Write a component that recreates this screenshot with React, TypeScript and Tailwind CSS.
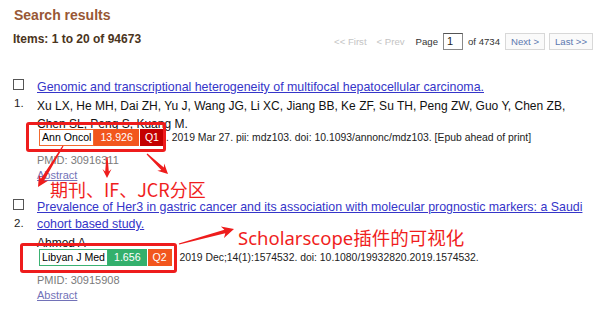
import React from "react";

type P = [number, number];

function arrowPoints(t: P, p: P, headLen = 11, headHalf = 5.5, shaftTail = 0.6, shaftHead = 1.8): string {
  const dx = p[0] - t[0];
  const dy = p[1] - t[1];
  const len = Math.hypot(dx, dy);
  const ux = dx / len;
  const uy = dy / len;
  const nx = -uy;
  const ny = ux;
  const bx = p[0] - ux * headLen;
  const by = p[1] - uy * headLen;
  const bx2 = p[0] - ux * (headLen - 2.5);
  const by2 = p[1] - uy * (headLen - 2.5);
  const pts: P[] = [
    [t[0] + nx * shaftTail, t[1] + ny * shaftTail],
    [bx2 + nx * shaftHead, by2 + ny * shaftHead],
    [bx + nx * headHalf, by + ny * headHalf],
    p,
    [bx - nx * headHalf, by - ny * headHalf],
    [bx2 - nx * shaftHead, by2 - ny * shaftHead],
    [t[0] - nx * shaftTail, t[1] - ny * shaftTail],
  ];
  return pts.map((q) => `${q[0].toFixed(1)},${q[1].toFixed(1)}`).join(" ");
}

function Checkbox() {
  return <div className="w-[11px] h-[11px] border border-[#555] bg-white" />;
}

function Badge({
  name,
  impact,
  q,
  nameBorder,
  impactBg,
  qBg,
}: {
  name: string;
  impact: string;
  q: string;
  nameBorder: string;
  impactBg: string;
  qBg: string;
}) {
  return (
    <span className="inline-flex items-stretch h-[17px] text-[10.6px] leading-[15px] align-middle">
      <span className={`bg-white text-black px-[2px] border ${nameBorder}`}>{name}</span>
      <span className={`text-white px-[6px] pt-px ${impactBg}`}>{impact}</span>
      <span className={`text-white px-[5px] pt-px ml-px ${qBg}`}>{q}</span>
    </span>
  );
}

function Result({
  num,
  title,
  authors,
  badge,
  cite,
  pmid,
  top,
  badgeGap,
}: {
  num: string;
  title: React.ReactNode;
  authors: React.ReactNode;
  badge: React.ReactNode;
  cite: string;
  pmid: string;
  top: string;
  badgeGap: string;
}) {
  return (
    <div className={`flex ${top}`}>
      <div className="w-[24px] shrink-0 flex flex-col">
        <div>
          <Checkbox />
        </div>
        <div className="text-[11.5px] leading-[17px] text-[#222] mt-[5px] pl-px">{num}</div>
      </div>
      <div className="w-[556px]">
        <a className="block text-[12.4px] leading-[17px] text-[#3535c9] underline underline-offset-[1px]">{title}</a>
        <div className="text-[12px] leading-[18px] text-[#111] mt-[1px]">{authors}</div>
        <div className={`flex items-center ${badgeGap} ml-[2px] text-[10.4px] text-[#222]`}>
          {badge}
          <span className="ml-[2px]">{cite}</span>
        </div>
        <div className="text-[11px] leading-[14px] text-[#7a7a7a] mt-[7px]">PMID: {pmid}</div>
        <div className="text-[11px] leading-[14px] text-[#7272b8] underline mt-px">Abstract</div>
      </div>
    </div>
  );
}

export default function App() {
  return (
    <div className="relative w-[600px] h-[313px] overflow-hidden bg-white font-['Liberation_Sans',Arial,sans-serif]">
      <div className="pl-[13px] pt-[6px]">
        <h2 className="text-[14px] leading-[18px] font-bold text-[#985735] pl-px">Search results</h2>
        <div className="flex items-start justify-between pr-[7px] mt-[7px]">
          <div className="text-[12px] leading-[16px] font-bold text-[#4a3420]">Items: 1 to 20 of 94673</div>
          <div className="flex items-center text-[9.6px] leading-[15px] mt-[2px]">
            <span className="text-[#c4c4c4]">&lt;&lt; First</span>
            <span className="ml-[10px] text-[#c4c4c4]">&lt; Prev</span>
            <span className="ml-[11px] text-[#333]">Page</span>
            <span className="ml-[5px] w-[20px] h-[17px] border border-[#888] border-t-[#555] text-[#222] text-[11px] pl-[3px] leading-[15px]">1</span>
            <span className="ml-[5px] text-[#333]">of 4734</span>
            <span className="ml-[5px] h-[17px] border border-[#d8d8d8] bg-[#fafafa] text-[#5a78b0] px-[5px] leading-[15px]">Next &gt;</span>
            <span className="ml-[4px] h-[17px] border border-[#d8d8d8] bg-[#fafafa] text-[#5a78b0] px-[5px] leading-[15px]">Last &gt;&gt;</span>
          </div>
        </div>

        <Result
          top="mt-[29px]"
          badgeGap="-mt-[4px]"
          num="1."
          title="Genomic and transcriptional heterogeneity of multifocal hepatocellular carcinoma."
          authors="Xu LX, He MH, Dai ZH, Yu J, Wang JG, Li XC, Jiang BB, Ke ZF, Su TH, Peng ZW, Guo Y, Chen ZB, Chen SL, Peng S, Kuang M."
          badge={
            <Badge
              name="Ann Oncol"
              impact="13.926"
              q="Q1"
              nameBorder="border-[#f26a2e]"
              impactBg="bg-[#f2561d]"
              qBg="bg-[#c40000]"
            />
          }
          cite=". 2019 Mar 27. pii: mdz103. doi: 10.1093/annonc/mdz103. [Epub ahead of print]"
          pmid="30916311"
        />

        <Result
          top="mt-[17px]"
          badgeGap="-mt-[3px]"
          num="2."
          title="Prevalence of Her3 in gastric cancer and its association with molecular prognostic markers: a Saudi cohort based study."
          authors="Ahmed A"
          badge={
            <Badge
              name="Libyan J Med"
              impact="1.656"
              q="Q2"
              nameBorder="border-[#3bb273]"
              impactBg="bg-[#33b06c]"
              qBg="bg-[#f2561d]"
            />
          }
          cite=". 2019 Dec;14(1):1574532. doi: 10.1080/19932820.2019.1574532."
          pmid="30915908"
        />
      </div>

      {/* annotation overlay */}
      <div className="absolute left-[26px] top-[122px] w-[140px] h-[30px] border-[3px] border-[#ee1c1c] rounded-[3px]" />
      <div className="absolute left-[20px] top-[243px] w-[157px] h-[30px] border-[3px] border-[#ee1c1c] rounded-[3px]" />
      <div className="absolute left-[50px] top-[177px] text-[18px] leading-[24px] text-[#f01e1e] font-['Noto_Sans_CJK_SC','Noto_Sans',sans-serif]">
        期刊、IF、JCR分区
      </div>
      <div className="absolute left-[238px] top-[225px] text-[18.5px] leading-[26px] text-[#f01e1e] font-['Noto_Sans','Noto_Sans_CJK_SC',sans-serif]">
        Scholarscope插件的可视化
      </div>
      <svg className="absolute inset-0 pointer-events-none" width="600" height="313" viewBox="0 0 600 313">
        <polygon points={arrowPoints([63, 146], [38, 187])} fill="#ee1c1c" />
        <polygon points={arrowPoints([107, 157], [107, 178], 9, 4.5)} fill="#ee1c1c" />
        <polygon points={arrowPoints([147, 154], [168, 174], 10, 5)} fill="#ee1c1c" />
        <polygon points={arrowPoints([179, 244], [234, 229], 12, 6)} fill="#ee1c1c" />
      </svg>
    </div>
  );
}
